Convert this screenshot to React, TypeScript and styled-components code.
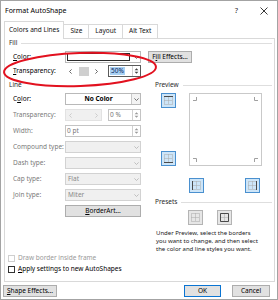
import React from 'react';
import styled, { createGlobalStyle } from 'styled-components';

const GlobalStyle = createGlobalStyle`
    html, body {
        margin: 0;
        padding: 0;
        background: #ffffff;
    }
    body {
        font-family: 'Noto Sans', 'Open Sans', sans-serif;
        font-size: 6.5px;
        line-height: 1;
        color: #000;
    }
    * {
        box-sizing: border-box;
    }
`;

const Window = styled.div`
    position: relative;
    width: 278px;
    height: 300px;
    border: 1px solid #a3a3a3;
    background: #ffffff;
    display: flex;
    flex-direction: column;
    overflow: hidden;
`;

const TitleBar = styled.div`
    flex: none;
    height: 19px;
    display: flex;
    align-items: center;
    padding-left: 4px;
    font-size: 7px;
`;

const TitleText = styled.span`
    flex: 1;
`;

const CaptionButton = styled.span`
    width: 27px;
    height: 19px;
    display: flex;
    align-items: center;
    justify-content: center;
    font-size: 7.5px;
    color: #222;
`;

const Client = styled.div`
    flex: 1;
    display: flex;
    flex-direction: column;
    padding: 1px 2px 0 3px;
`;

const TabStrip = styled.div`
    position: relative;
    z-index: 1;
    height: 17px;
    display: flex;
    align-items: flex-end;
`;

const Tab = styled.span<{ $active?: boolean }>`
    height: ${p => (p.$active ? '18px' : '14px')};
    margin-bottom: ${p => (p.$active ? '-1px' : '0')};
    margin-left: ${p => (p.$active ? '0' : '-1px')};
    padding: ${p => (p.$active ? '0 4px' : '0 6px')};
    display: flex;
    align-items: center;
    background: #fff;
    border: 1px solid #d9d9d9;
    border-bottom: none;
    color: #111;
    white-space: nowrap;
`;

const Page = styled.div`
    flex: none;
    height: 244px;
    background: #fff;
    border: 1px solid #d9d9d9;
    padding: 0 2px 0 4px;
    display: flex;
    flex-direction: column;
`;

const SectionHeader = styled.div<{ $gapTop?: number }>`
    height: 9px;
    margin-top: ${p => p.$gapTop || 0}px;
    display: flex;
    align-items: center;
    gap: 4px;
    color: #2b2b2b;
`;

const Rule = styled.span`
    flex: 1;
    height: 1px;
    background: #dedede;
`;

const FillGrid = styled.div`
    margin-top: 3px;
    display: grid;
    grid-template-columns: 56px 76px auto;
    grid-auto-rows: 12px;
    row-gap: 2px;
    align-items: center;
`;

const FieldLabel = styled.span<{ $disabled?: boolean }>`
    padding-left: 4px;
    white-space: nowrap;
    color: ${p => (p.$disabled ? '#7a7a7a' : '#000')};
`;

const Combo = styled.div<{ $disabled?: boolean }>`
    height: 12px;
    display: flex;
    align-items: stretch;
    border: 1px solid ${p => (p.$disabled ? '#d2d2d2' : '#b9b9b9')};
    background: ${p => (p.$disabled ? '#f0f0f0' : '#fff')};
    color: ${p => (p.$disabled ? '#8a8a8a' : '#000')};
`;

const ComboText = styled.span<{ $center?: boolean }>`
    flex: 1;
    display: flex;
    align-items: center;
    justify-content: ${p => (p.$center ? 'center' : 'flex-start')};
    padding-left: ${p => (p.$center ? '0' : '2px')};
    font-weight: ${p => (p.$center ? 700 : 400)};
`;

const Swatch = styled.span`
    flex: 1;
    margin: 1px;
    border: 1px solid #2a2a2a;
    background: #fff;
`;

const ComboButton = styled.span<{ $framed?: boolean }>`
    width: 9px;
    display: flex;
    align-items: center;
    justify-content: center;
    border-left: 1px solid ${p => (p.$framed ? '#c8c8c8' : 'transparent')};
    background: ${p => (p.$framed ? '#f3f3f3' : 'transparent')};
`;

const SpinField = styled.div<{ $focused?: boolean; $wide?: boolean }>`
    width: ${p => (p.$wide ? '76px' : '33px')};
    height: 12px;
    display: flex;
    border: 1px solid ${p => (p.$focused ? '#5a5a5a' : '#c4c4c4')};
    background: #fff;
`;

const SpinValue = styled.span<{ $disabled?: boolean }>`
    flex: 1;
    display: flex;
    align-items: center;
    padding-left: 1px;
    color: ${p => (p.$disabled ? '#777' : '#000')};
`;

const Selected = styled.span`
    background: #a9d1f3;
    color: #0d1d5c;
    padding: 1px 1px;
`;

const SpinArrows = styled.span`
    width: 8px;
    display: flex;
    align-items: center;
    justify-content: center;
    border-left: 1px solid #d0d0d0;
`;

const TransparencyControl = styled.div`
    display: flex;
    gap: 6px;
`;

const Slider = styled.div<{ $disabled?: boolean }>`
    width: 37px;
    height: 12px;
    display: flex;
    align-items: center;
    justify-content: space-between;
    padding: 0 3px;
    background: ${p => (p.$disabled ? '#f0f0f0' : '#fff')};
    border: 1px solid ${p => (p.$disabled ? '#e2e2e2' : '#fff')};
`;

const Thumb = styled.span`
    width: 10px;
    height: 9px;
    background: #cfcfcf;
`;

const PushButton = styled.span<{ $default?: boolean; $width: number }>`
    width: ${p => p.$width}px;
    height: 12px;
    display: flex;
    align-items: center;
    justify-content: center;
    background: #e1e1e1;
    border: 1px solid ${p => (p.$default ? '#0a74d2' : '#adadad')};
    white-space: nowrap;
`;

const FillEffects = styled(PushButton)`
    margin-left: 7px;
`;

const Columns = styled.div`
    margin-top: 4px;
    display: grid;
    grid-template-columns: 137px 117px;
    column-gap: 9px;
    align-items: start;
`;

const LineGrid = styled.div`
    margin-top: 1px;
    display: grid;
    grid-template-columns: 56px 76px;
    grid-auto-rows: 16px;
    align-items: center;
`;

const PreviewGrid = styled.div`
    margin-top: 3px;
    padding-left: 6px;
    display: grid;
    grid-template-columns: 15px 73px;
    grid-template-rows: 73px 15px;
    column-gap: 13px;
    row-gap: 12px;
`;

const SideStack = styled.div`
    display: flex;
    flex-direction: column;
    justify-content: space-between;
`;

const BottomRow = styled.div`
    grid-column: 2;
    display: flex;
    justify-content: space-between;
    padding-right: 2px;
`;

const Toggle = styled.span<{ $on?: boolean }>`
    width: 15px;
    height: 15px;
    display: flex;
    align-items: center;
    justify-content: center;
    background: ${p => (p.$on ? '#cde5f8' : '#e6e6e6')};
    border: 1px solid ${p => (p.$on ? '#4a90cf' : '#b4b4b4')};
`;

const PreviewBox = styled.div`
    border: 1px solid #c9c9c9;
    background: #fff;
    display: flex;
`;

const PresetRow = styled.div`
    margin-top: 3px;
    padding-left: 33px;
    display: flex;
    gap: 14px;
`;

const Hint = styled.p`
    margin: 4px 0 0 1px;
    font-size: 6px;
    line-height: 8px;
    color: #1a1a1a;
    white-space: nowrap;
`;

const Checks = styled.div`
    display: flex;
    flex-direction: column;
    margin-left: -1px;
`;

const CheckRow = styled.label<{ $disabled?: boolean }>`
    height: 11px;
    display: flex;
    align-items: center;
    gap: 3px;
    color: ${p => (p.$disabled ? '#9a9a9a' : '#000')};
`;

const CheckBox = styled.span<{ $disabled?: boolean }>`
    width: 7px;
    height: 7px;
    border: 1px solid ${p => (p.$disabled ? '#cfcfcf' : '#333')};
    background: #fff;
`;

const Footer = styled.div`
    padding-top: 3px;
    display: flex;
    justify-content: space-between;
`;

const FooterRight = styled.div`
    display: flex;
    gap: 11px;
    margin-right: 5px;
`;

const ShapeEffects = styled(PushButton)`
    margin-left: -1px;
`;

const Annotation = styled.svg`
    position: absolute;
    left: -1px;
    top: -1px;
    pointer-events: none;
`;

const Chevron = ({ muted }: { muted?: boolean }) => (
    <svg width="5" height="3" viewBox="0 0 5 3">
        <polyline points="0.4,0.4 2.5,2.5 4.6,0.4" fill="none" stroke={muted ? '#b3b3b3' : '#555'} strokeWidth="0.8" />
    </svg>
);

const Arrow = ({ dir, muted }: { dir: 'l' | 'r'; muted?: boolean }) => (
    <svg width="3" height="5" viewBox="0 0 3 5">
        <polyline
            points={dir === 'l' ? '2.6,0.4 0.5,2.5 2.6,4.6' : '0.4,0.4 2.5,2.5 0.4,4.6'}
            fill="none"
            stroke={muted ? '#c4c4c4' : '#444'}
            strokeWidth="0.8"
        />
    </svg>
);

const SpinGlyph = ({ muted }: { muted?: boolean }) => (
    <svg width="5" height="8" viewBox="0 0 5 8">
        <path d="M0.6 3.2 L2.5 1.2 L4.4 3.2Z M0.6 4.8 L2.5 6.8 L4.4 4.8Z" fill={muted ? '#9a9a9a' : '#444'} />
    </svg>
);

type Side = 'top' | 'bottom' | 'left' | 'right' | 'box' | 'none';

const BorderIcon = ({ side }: { side: Side }) => {
    const edge: Record<string, string> = {
        top: 'M0 0.5H9',
        bottom: 'M0 8.5H9',
        left: 'M0.5 0V9',
        right: 'M8.5 0V9',
        box: 'M0.5 0.5H8.5V8.5H0.5Z'
    };
    return (
        <svg width="9" height="9" viewBox="0 0 9 9">
            <rect x="0.5" y="0.5" width="8" height="8" fill="none" stroke="#a8a8a8" strokeDasharray="1 1" />
            <path d="M4.5 0.5V8.5M0.5 4.5H8.5" stroke="#a8a8a8" strokeDasharray="1 1" />
            {edge[side] && <path d={edge[side]} fill="none" stroke="#4a4a4a" />}
        </svg>
    );
};

const CornerMarks = () => (
    <svg width="71" height="71" viewBox="0 0 71 71">
        <path
            d="M6.5 3V6.5H3 M64.5 3V6.5H68 M6.5 68V64.5H3 M64.5 68V64.5H68"
            fill="none"
            stroke="#a0a0a0"
            strokeWidth="1"
        />
    </svg>
);

export default function App() {
    return (
        <>
            <GlobalStyle />
            <Window>
                <TitleBar>
                    <TitleText>Format AutoShape</TitleText>
                    <CaptionButton>?</CaptionButton>
                    <CaptionButton>
                        <svg width="8" height="8" viewBox="0 0 8 8">
                            <path d="M0.5 0.5L7.5 7.5M7.5 0.5L0.5 7.5" stroke="#222" strokeWidth="0.9" />
                        </svg>
                    </CaptionButton>
                </TitleBar>

                <Client>
                    <TabStrip>
                        <Tab $active>Colors and Lines</Tab>
                        <Tab>Size</Tab>
                        <Tab>Layout</Tab>
                        <Tab>Alt Text</Tab>
                    </TabStrip>

                    <Page>
                        <SectionHeader>
                            Fill
                            <Rule />
                        </SectionHeader>
                        <FillGrid>
                            <FieldLabel>
                                <u>C</u>olor:
                            </FieldLabel>
                            <Combo>
                                <Swatch />
                                <ComboButton>
                                    <Chevron />
                                </ComboButton>
                            </Combo>
                            <FillEffects $width={44}>
                                F<u>i</u>ll Effects...
                            </FillEffects>

                            <FieldLabel>
                                <u>T</u>ransparency:
                            </FieldLabel>
                            <TransparencyControl>
                                <Slider>
                                    <Arrow dir="l" />
                                    <Thumb />
                                    <Arrow dir="r" />
                                </Slider>
                                <SpinField $focused>
                                    <SpinValue>
                                        <Selected>50%</Selected>
                                    </SpinValue>
                                    <SpinArrows>
                                        <SpinGlyph />
                                    </SpinArrows>
                                </SpinField>
                            </TransparencyControl>
                        </FillGrid>

                        <Columns>
                            <div>
                                <SectionHeader>Line</SectionHeader>
                                <LineGrid>
                                    <FieldLabel>
                                        C<u>o</u>lor:
                                    </FieldLabel>
                                    <Combo>
                                        <ComboText $center>No Color</ComboText>
                                        <ComboButton $framed>
                                            <Chevron />
                                        </ComboButton>
                                    </Combo>

                                    <FieldLabel $disabled>Transparency:</FieldLabel>
                                    <TransparencyControl>
                                        <Slider $disabled>
                                            <Arrow dir="l" muted />
                                            <Arrow dir="r" muted />
                                        </Slider>
                                        <SpinField>
                                            <SpinValue $disabled>0 %</SpinValue>
                                            <SpinArrows>
                                                <SpinGlyph muted />
                                            </SpinArrows>
                                        </SpinField>
                                    </TransparencyControl>

                                    <FieldLabel $disabled>Width:</FieldLabel>
                                    <SpinField $wide>
                                        <SpinValue $disabled>0 pt</SpinValue>
                                        <SpinArrows>
                                            <SpinGlyph muted />
                                        </SpinArrows>
                                    </SpinField>

                                    <FieldLabel $disabled>Compound type:</FieldLabel>
                                    <Combo $disabled>
                                        <ComboText />
                                        <ComboButton>
                                            <Chevron muted />
                                        </ComboButton>
                                    </Combo>

                                    <FieldLabel $disabled>Dash type:</FieldLabel>
                                    <Combo $disabled>
                                        <ComboText />
                                        <ComboButton>
                                            <Chevron muted />
                                        </ComboButton>
                                    </Combo>

                                    <FieldLabel $disabled>Cap type:</FieldLabel>
                                    <Combo $disabled>
                                        <ComboText>Flat</ComboText>
                                        <ComboButton>
                                            <Chevron muted />
                                        </ComboButton>
                                    </Combo>

                                    <FieldLabel $disabled>Join type:</FieldLabel>
                                    <Combo $disabled>
                                        <ComboText>Miter</ComboText>
                                        <ComboButton>
                                            <Chevron muted />
                                        </ComboButton>
                                    </Combo>

                                    <span />
                                    <PushButton $width={76}>
                                        <u>B</u>orderArt...
                                    </PushButton>
                                </LineGrid>
                            </div>

                            <div>
                                <SectionHeader>
                                    Preview
                                    <Rule />
                                </SectionHeader>
                                <PreviewGrid>
                                    <SideStack>
                                        <Toggle $on>
                                            <BorderIcon side="top" />
                                        </Toggle>
                                        <Toggle $on>
                                            <BorderIcon side="bottom" />
                                        </Toggle>
                                    </SideStack>
                                    <PreviewBox>
                                        <CornerMarks />
                                    </PreviewBox>
                                    <BottomRow>
                                        <Toggle $on>
                                            <BorderIcon side="left" />
                                        </Toggle>
                                        <Toggle $on>
                                            <BorderIcon side="right" />
                                        </Toggle>
                                    </BottomRow>
                                </PreviewGrid>

                                <SectionHeader $gapTop={5}>
                                    Presets
                                    <Rule />
                                </SectionHeader>
                                <PresetRow>
                                    <Toggle>
                                        <BorderIcon side="none" />
                                    </Toggle>
                                    <Toggle>
                                        <BorderIcon side="box" />
                                    </Toggle>
                                </PresetRow>

                                <Hint>
                                    Under Preview, select the borders
                                    <br />
                                    you want to change, and then select
                                    <br />
                                    the color and line styles you want.
                                </Hint>
                            </div>
                        </Columns>

                        <Checks>
                            <CheckRow $disabled>
                                <CheckBox $disabled />
                                Draw border inside frame
                            </CheckRow>
                            <CheckRow>
                                <CheckBox />
                                <span>
                                    <u>A</u>pply settings to new AutoShapes
                                </span>
                            </CheckRow>
                        </Checks>
                    </Page>

                    <Footer>
                        <ShapeEffects $width={54}>
                            <u>S</u>hape Effects...
                        </ShapeEffects>
                        <FooterRight>
                            <PushButton $default $width={37}>
                                OK
                            </PushButton>
                            <PushButton $width={38}>Cancel</PushButton>
                        </FooterRight>
                    </Footer>
                </Client>

                <Annotation width="278" height="300" viewBox="0 0 278 300">
                    <ellipse
                        cx="80"
                        cy="69.5"
                        rx="76"
                        ry="16.5"
                        transform="rotate(-2 80 69.5)"
                        fill="none"
                        stroke="#e2111f"
                        strokeWidth="2"
                    />
                </Annotation>
            </Window>
        </>
    );
}
